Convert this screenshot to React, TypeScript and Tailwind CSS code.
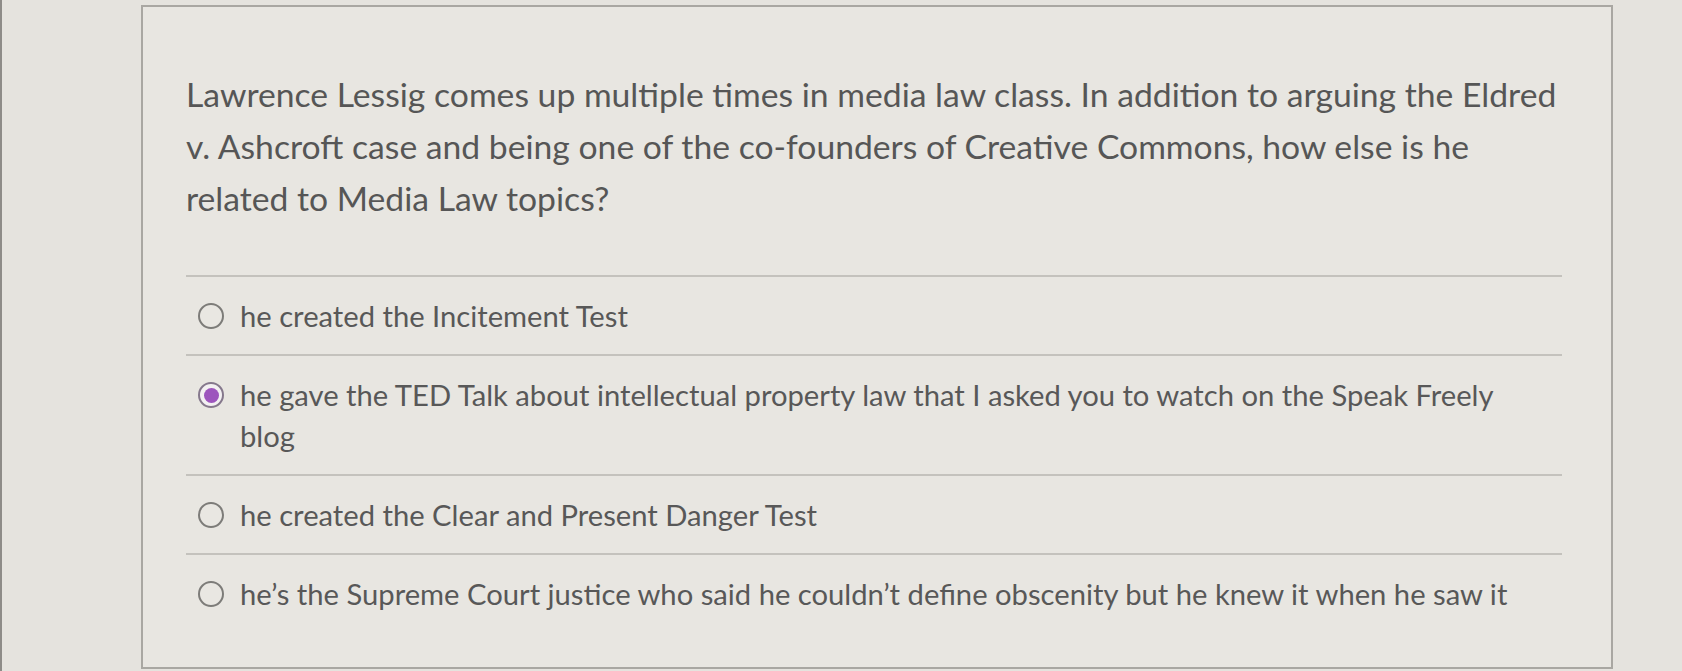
import React from "react";

const options = [
  { text: "he created the Incitement Test", selected: false },
  {
    text: "he gave the TED Talk about intellectual property law that I asked you to watch on the Speak Freely blog",
    selected: true,
  },
  { text: "he created the Clear and Present Danger Test", selected: false },
  {
    text: "he\u2019s the Supreme Court justice who said he couldn\u2019t define obscenity but he knew it when he saw it",
    selected: false,
  },
];

function Radio({ selected }: { selected: boolean }) {
  if (selected) {
    return (
      <span className="mt-[8px] flex h-[26px] w-[26px] shrink-0 items-center justify-center rounded-full border-[2.5px] border-[#85788c] bg-[#f3f0f2]">
        <span className="h-[15px] w-[15px] rounded-full bg-[#9d55bd]" />
      </span>
    );
  }
  return (
    <span className="mt-[8px] h-[26px] w-[26px] shrink-0 rounded-full border-[2.5px] border-[#7d7c79] bg-[#e9e7e2]" />
  );
}

export default function App() {
  return (
    <div
      className="h-[671px] w-[1682px] overflow-hidden bg-[#e5e3de] pt-[5px] pl-[139px] border-l-[2px] border-[#8e8c88]"
      style={{ fontFamily: "Lato, 'Open Sans', sans-serif" }}
    >
      <div className="h-[664px] w-[1472px] border-[2px] border-[#a9a7a2] bg-[#e8e6e1] pl-[43px] pr-[49px] pt-[61px]">
        <p className="text-[33.7px] leading-[52px] text-[#565656]">
          Lawrence Lessig comes up multiple times in media law class. In addition to arguing the Eldred
          <br />
          v. Ashcroft case and being one of the co-founders of Creative Commons, how else is he
          <br />
          related to Media Law topics?
        </p>
        <div className="mt-[51px]">
          {options.map((o, i) => (
            <div
              key={i}
              className="flex gap-[16px] border-t-[2px] border-[#c4c2bd] py-[18px] pl-[12px] pr-[30px]"
            >
              <Radio selected={o.selected} />
              <span className="text-[29.2px] leading-[41px] text-[#585858]">{o.text}</span>
            </div>
          ))}
        </div>
      </div>
    </div>
  );
}
